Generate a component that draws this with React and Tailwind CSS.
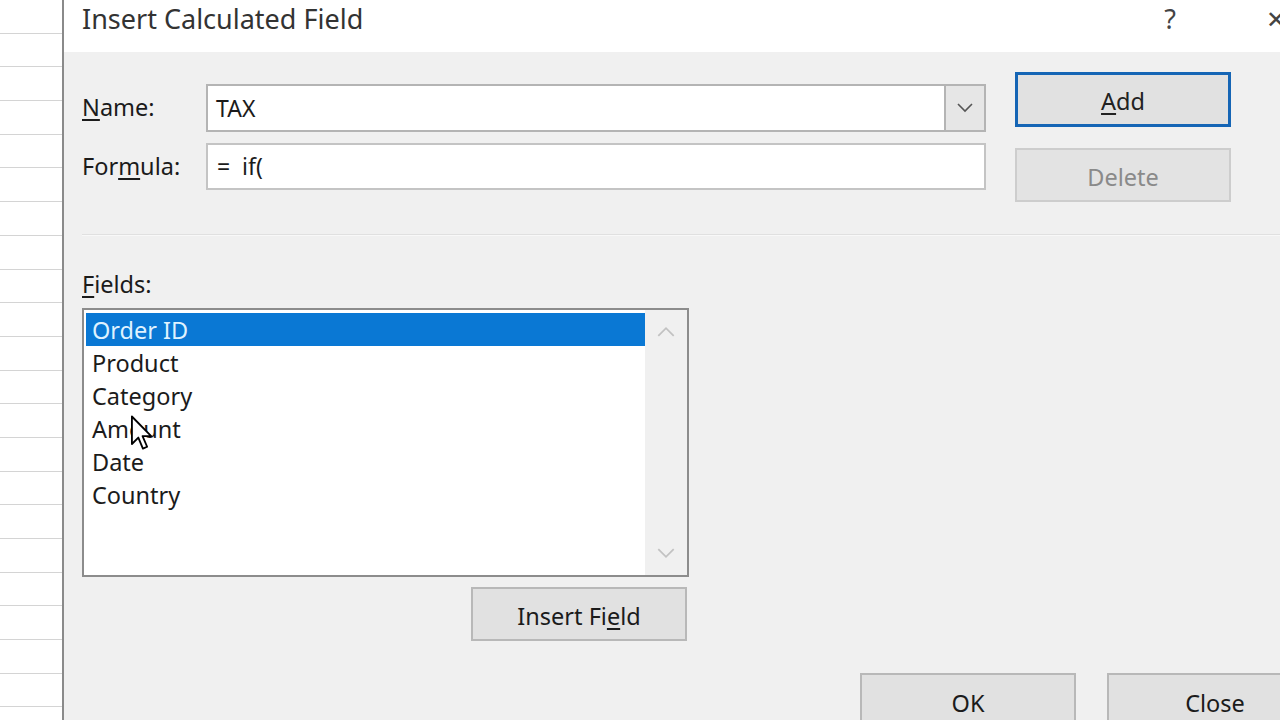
import React from 'react';

const font = { fontFamily: '"Noto Sans", "Open Sans", Arial, sans-serif' };

function Mnemonic({ before = '', letter, after = '' }) {
  return (
    <span>
      {before}
      <span className="underline underline-offset-[3px] decoration-[1.5px]">{letter}</span>
      {after}
    </span>
  );
}

function SheetStrip() {
  const rows = Array.from({ length: 22 });
  return (
    <div className="w-[64px] shrink-0 bg-white border-r-2 border-[#8a8a8a] flex flex-col">
      {rows.map((_, i) => (
        <div key={i} className="h-[33.7px] shrink-0 border-b border-[#d4d4d4]" />
      ))}
    </div>
  );
}

function Chevron({ up = false, className = '' }) {
  return (
    <svg className={className} viewBox="0 0 16 10" fill="none" stroke="currentColor" strokeWidth="1.6">
      {up ? <path d="M1 9 L8 2 L15 9" /> : <path d="M1 1 L8 8 L15 1" />}
    </svg>
  );
}

function Cursor() {
  return (
    <svg className="absolute left-[131px] top-[415px] w-[22px] h-[36px]" viewBox="0 0 12 19">
      <path d="M0.5 0.5 L0.5 15.5 L4 12 L6.5 18 L8.8 17 L6.3 11.2 L11 11.2 Z" fill="white" stroke="black" strokeWidth="1" strokeLinejoin="round" />
    </svg>
  );
}

const fields = ['Order ID', 'Product', 'Category', 'Amount', 'Date', 'Country'];

export default function App() {
  return (
    <div className="relative w-[1280px] h-[720px] flex overflow-hidden text-[#1b1b1b]" style={font}>
      <SheetStrip />
      <div className="flex-1 flex flex-col min-w-0">
        {/* Title bar */}
        <div className="h-[52px] shrink-0 bg-white flex items-center pl-[18px] pb-[14px]">
          <span className="text-[27px] text-[#333]">Insert Calculated Field</span>
          <span className="ml-auto mr-[90px] text-[27px] text-[#444]">?</span>
          <span className="text-[24px] text-[#444] -mr-[6px]">✕</span>
        </div>

        {/* Body */}
        <div className="flex-1 bg-[#f0f0f0] pl-[18px] pt-[20px] flex flex-col">
          <div className="flex">
            <div className="flex flex-col w-[904px]">
              <div className="flex items-center mt-[12px] h-[48px]">
                <div className="w-[124px] text-[23.5px]">
                  <Mnemonic letter="N" after="ame:" />
                </div>
                <div className="flex-1 h-full flex bg-white border-2 border-[#b4b4b4]">
                  <div className="flex-1 flex items-center pl-[8px] text-[23px]">TAX</div>
                  <div className="w-[40px] bg-[#e6e6e6] border-l-2 border-[#b4b4b4] flex items-center justify-center text-[#555]">
                    <Chevron className="w-[16px] h-[10px]" />
                  </div>
                </div>
              </div>
              <div className="flex items-center mt-[11px] h-[47px]">
                <div className="w-[124px] text-[23.5px]">
                  <Mnemonic before="For" letter="m" after="ula:" />
                </div>
                <div className="flex-1 h-full flex items-center bg-white border-2 border-[#c4c4c4] pl-[9px] text-[23px]">
                  =&nbsp; if(
                </div>
              </div>
            </div>
            <div className="ml-[29px] flex flex-col w-[216px]">
              <button className="h-[55px] pt-[5px] bg-[#e1e1e1] border-[3px] border-[#1565b5] text-[23.5px] text-[#222]">
                <Mnemonic letter="A" after="dd" />
              </button>
              <button className="mt-[21px] h-[54px] pt-[5px] bg-[#e3e3e3] border-2 border-[#cdcdcd] text-[23.5px] text-[#8a8a8a]">
                Delete
              </button>
            </div>
          </div>

          <div className="mt-[32px] h-[2px] bg-[#e0e0e0] border-b border-[#f8f8f8]" />

          <div className="mt-[33px] text-[23.5px] leading-[30px]">
            <Mnemonic letter="F" after="ields:" />
          </div>

          <div className="mt-[9px] w-[607px] h-[269px] border-2 border-[#8c8c8c] bg-white flex">
            <div className="flex-1 flex flex-col pt-[3px] pl-[2px]">
              {fields.map((f, i) => (
                <div
                  key={f}
                  className={`h-[33px] shrink-0 flex items-center pl-[6px] pt-[2px] text-[23.5px] ${i === 0 ? 'bg-[#0a78d4] text-[#dff2ff]' : ''}`}
                >
                  {f}
                </div>
              ))}
            </div>
            <div className="w-[42px] bg-[#f0f0f0] flex flex-col items-center justify-between py-[16px] text-[#c2c2c2]">
              <Chevron up className="w-[18px] h-[11px]" />
              <Chevron className="w-[18px] h-[11px]" />
            </div>
          </div>

          <div className="flex mt-[10px]">
            <button className="ml-[389px] w-[216px] h-[54px] pt-[6px] bg-[#e1e1e1] border-2 border-[#b8b8b8] text-[23.5px]">
              Insert Fi<span className="underline underline-offset-[3px] decoration-[1.5px]">e</span>ld
            </button>
          </div>

          <div className="flex mt-[32px]">
            <button className="ml-[778px] w-[216px] h-[60px] shrink-0 bg-[#e1e1e1] border-2 border-[#b8b8b8] text-[23.5px] pt-[2px]">
              OK
            </button>
            <button className="ml-[31px] w-[216px] h-[60px] shrink-0 bg-[#e1e1e1] border-2 border-[#b8b8b8] text-[23.5px] pt-[2px]">
              Close
            </button>
          </div>
        </div>
      </div>
      <Cursor />
    </div>
  );
}
